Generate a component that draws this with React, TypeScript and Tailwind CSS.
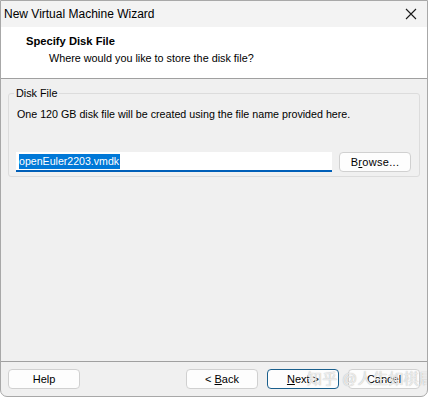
import React from 'react';

const font = { fontFamily: '"Liberation Sans", "Noto Sans CJK SC", sans-serif' };

const Btn: React.FC<{ children: React.ReactNode; focused?: boolean; className?: string }> = ({ children, focused, className }) => (
  <button
    className={
      'h-[20px] w-[72px] rounded-[4px] bg-[#fdfdfd] text-[11px] leading-[14px] text-black flex items-center justify-center ' +
      (focused ? 'border border-[#1a5f8c] ' : 'border border-[#d0d0d0] ') +
      (className ?? '')
    }
  >
    {children}
  </button>
);

export default function App() {
  return (
    <div className="w-[428px] h-[397px] bg-[#f0f0f0] flex flex-col border border-[#a8a8a8] rounded-b-[7px] overflow-hidden relative" style={font}>
      {/* title bar */}
      <div className="h-[26px] bg-[#f3f3f3] flex items-center justify-between pl-[3px] pr-[10px] shrink-0">
        <span className="text-[12px] text-black">New Virtual Machine Wizard</span>
        <svg width="12" height="12" viewBox="0 0 12 12">
          <path d="M1 1 L11 11 M11 1 L1 11" stroke="#1a1a1a" strokeWidth="1.1" />
        </svg>
      </div>

      {/* header */}
      <div className="h-[52px] bg-white border-b border-[#a0a0a0] shrink-0 pt-[6px]">
        <div className="pl-[25px] text-[11.2px] font-bold text-black leading-[16px]">Specify Disk File</div>
        <div className="pl-[48px] text-[10.8px] text-black leading-[16px] mt-[1px]">Where would you like to store the disk file?</div>
      </div>

      {/* body */}
      <div className="flex-1 px-[7px] pt-[8px]">
        <div className="relative border border-[#dcdcdc] rounded-[3px] h-[84px] mt-[6px] px-[8px] pt-[12px]">
          <span className="absolute -top-[9px] left-[5px] px-[2px] bg-[#f0f0f0] text-[10.8px] text-black leading-[16px]">Disk File</span>
          <div className="text-[10.7px] text-black leading-[16px]">One 120 GB disk file will be created using the file name provided here.</div>
          <div className="flex items-center mt-[30px] gap-[7px] -ml-[1px]">
            <div className="w-[316px] h-[20px] bg-white border-b-2 border-[#005fb8] flex items-center pl-[3px]">
              <span className="bg-[#0078d7] text-white text-[10.6px] leading-[15px] pr-[1px]">openEuler2203.vmdk</span>
            </div>
            <Btn>
              <span className="tracking-[0.3px]">
                B<span className="underline">r</span>owse...
              </span>
            </Btn>
          </div>
        </div>
      </div>

      {/* footer */}
      <div className="h-[35px] border-t border-[#a0a0a0] flex items-center px-[7px] shrink-0">
        <Btn>Help</Btn>
        <div className="flex-1" />
        <Btn>
          <span>
            &lt; <span className="underline">B</span>ack
          </span>
        </Btn>
        <Btn focused className="ml-[9px]">
          <span>
            <span className="underline">N</span>ext &gt;
          </span>
        </Btn>
        <Btn className="ml-[9px]">Cancel</Btn>
      </div>

      <span className="absolute left-[306px] top-[368px] whitespace-nowrap text-[15px] leading-[20px] text-white/75 tracking-[0.3px] pointer-events-none" style={{ textShadow: '0 0 1px #a0a0a0' }}>
        知乎 @人生如棋局
      </span>
    </div>
  );
}
